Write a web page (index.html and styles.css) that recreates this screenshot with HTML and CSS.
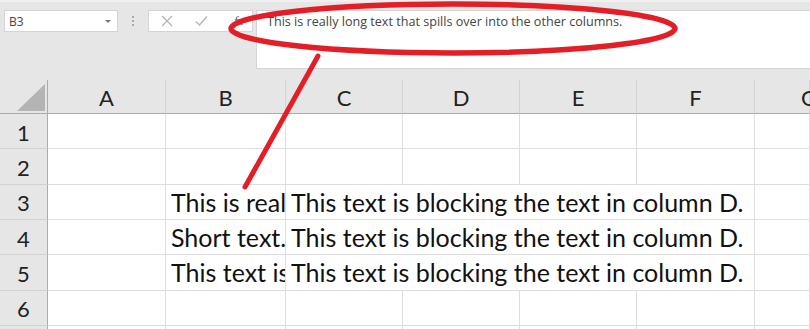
FILE: index.html
```html
<!DOCTYPE html>
<html>
<head>
<meta charset="utf-8">
<link rel="stylesheet" href="styles.css">
</head>
<body>
<div class="app">
  <div class="toolbar">
    <div class="namebox"><span class="ref">B3</span><span class="caret"></span></div>
    <div class="dots"><i></i><i></i><i></i></div>
    <div class="fxbox">
      <svg class="ico" width="12" height="12" viewBox="0 0 12 12"><path d="M1 1 L11 11 M11 1 L1 11" stroke="#b5b5b5" stroke-width="1.3" fill="none"/></svg>
      <svg class="ico" width="13" height="12" viewBox="0 0 13 12"><path d="M1 6.5 L4.5 10 L12 1.5" stroke="#b5b5b5" stroke-width="1.4" fill="none"/></svg>
      <span class="fx">fx</span>
    </div>
    <div class="formula">This is really long text that spills over into the other columns.</div>
  </div>
  <div class="sheet">
    <div class="corner"><span class="tri"></span></div>
    <div class="colh">A</div>
    <div class="colh">B</div>
    <div class="colh">C</div>
    <div class="colh">D</div>
    <div class="colh">E</div>
    <div class="colh">F</div>
    <div class="colh last">G</div>

    <div class="rowh">1</div>
    <div class="cell"></div><div class="cell"></div><div class="cell"></div><div class="cell"></div><div class="cell"></div><div class="cell"></div><div class="cell"></div>

    <div class="rowh">2</div>
    <div class="cell"></div><div class="cell"></div><div class="cell"></div><div class="cell"></div><div class="cell"></div><div class="cell"></div><div class="cell"></div>

    <div class="rowh">3</div>
    <div class="cell"></div><div class="cell txt">This is really long text that spills over into the other columns.</div><div class="cell txt span4">This text is blocking the text in column D.</div><div class="cell"></div>

    <div class="rowh">4</div>
    <div class="cell"></div><div class="cell txt">Short text.</div><div class="cell txt span4">This text is blocking the text in column D.</div><div class="cell"></div>

    <div class="rowh">5</div>
    <div class="cell"></div><div class="cell txt">This text is blocked.</div><div class="cell txt span4">This text is blocking the text in column D.</div><div class="cell"></div>

    <div class="rowh">6</div>
    <div class="cell"></div><div class="cell"></div><div class="cell"></div><div class="cell"></div><div class="cell"></div><div class="cell"></div><div class="cell"></div>

    <div class="rowh">7</div>
    <div class="cell"></div><div class="cell"></div><div class="cell"></div><div class="cell"></div><div class="cell"></div><div class="cell"></div><div class="cell"></div>
  </div>
  <svg class="annot" width="810" height="329" viewBox="0 0 810 329">
    <ellipse cx="453" cy="28.5" rx="222" ry="24.5" fill="none" stroke="#e31e26" stroke-width="5.5"/>
    <path d="M318 56 L245 187" stroke="#e31e26" stroke-width="5" stroke-linecap="round" fill="none"/>
  </svg>
</div>
</body>
</html>
```

FILE: styles.css
```css
* { box-sizing: border-box; }
html, body { margin: 0; padding: 0; }
body {
  width: 810px;
  height: 329px;
  overflow: hidden;
  background: #e6e6e6;
  font-family: "Lato", "Liberation Sans", sans-serif;
}
.app {
  position: relative;
  width: 810px;
  height: 329px;
}
.toolbar {
  height: 80px;
  display: flex;
  align-items: flex-start;
  padding: 8px 0 0 4px;
  border-top: 2px solid #f0f0f0;
}
.namebox {
  width: 114px;
  height: 22px;
  background: #fff;
  border: 1px solid #d4d4d4;
  display: flex;
  align-items: center;
  justify-content: space-between;
  padding: 0 6px 0 4px;
  font-family: "Open Sans", "Liberation Sans", sans-serif;
  font-size: 12px;
  color: #444;
}
.caret {
  width: 0;
  height: 0;
  border-left: 3px solid transparent;
  border-right: 3px solid transparent;
  border-top: 3px solid #777;
}
.dots {
  width: 30px;
  height: 22px;
  display: flex;
  flex-direction: column;
  align-items: center;
  justify-content: center;
  gap: 2px;
}
.dots i {
  width: 2px;
  height: 2px;
  background: #aaa;
  display: block;
}
.fxbox {
  width: 105px;
  height: 22px;
  background: #fff;
  border: 1px solid #d4d4d4;
  display: flex;
  align-items: center;
  padding-left: 12px;
  gap: 22px;
}
.fx {
  font-family: "Liberation Serif", serif;
  font-style: italic;
  font-size: 13px;
  color: #555;
  margin-left: 4px;
}
.formula {
  flex: 1;
  height: 59px;
  margin-left: 3px;
  background: #fff;
  border: 1px solid #d4d4d4;
  border-right: none;
  padding: 2px 0 0 10px;
  font-family: "Open Sans", "Liberation Sans", sans-serif;
  font-size: 12.6px;
  color: #444;
  white-space: nowrap;
}
.sheet {
  display: grid;
  grid-template-columns: 48px 118px 120px 117px 117px 117px 118px 55px;
  grid-template-rows: 34px repeat(6, 35.33px) 20px;
  background: #fff;
  height: 249px;
  overflow: hidden;
}
.corner {
  background: #e6e6e6;
  border-right: 1px solid #ababab;
  border-bottom: 1px solid #ababab;
  position: relative;
}
.tri {
  position: absolute;
  right: 2px;
  bottom: 2px;
  width: 0;
  height: 0;
  border-left: 28px solid transparent;
  border-bottom: 27px solid #b4b4b4;
}
.colh {
  background: #e6e6e6;
  border-right: 1px solid #d2d2d2;
  border-bottom: 1px solid #ababab;
  display: flex;
  align-items: center;
  justify-content: center;
  font-size: 22px;
  color: #222;
  padding-top: 2px;
}
.colh.last { justify-content: flex-start; padding-left: 0; text-indent: 46px; }
.rowh {
  background: #e6e6e6;
  border-right: 1px solid #ababab;
  border-bottom: 1px solid #d2d2d2;
  display: flex;
  align-items: center;
  justify-content: center;
  font-size: 22px;
  color: #222;
  padding-top: 2px;
}
.cell {
  border-right: 1px solid #dedede;
  border-bottom: 1px solid #dedede;
}
.txt {
  font-size: 25px;
  color: #111;
  white-space: nowrap;
  overflow: hidden;
  padding: 1px 0 0 5px;
  line-height: 32px;
}
.span4 { grid-column: span 4; }
.annot {
  position: absolute;
  top: 0;
  left: 0;
  pointer-events: none;
}
```
